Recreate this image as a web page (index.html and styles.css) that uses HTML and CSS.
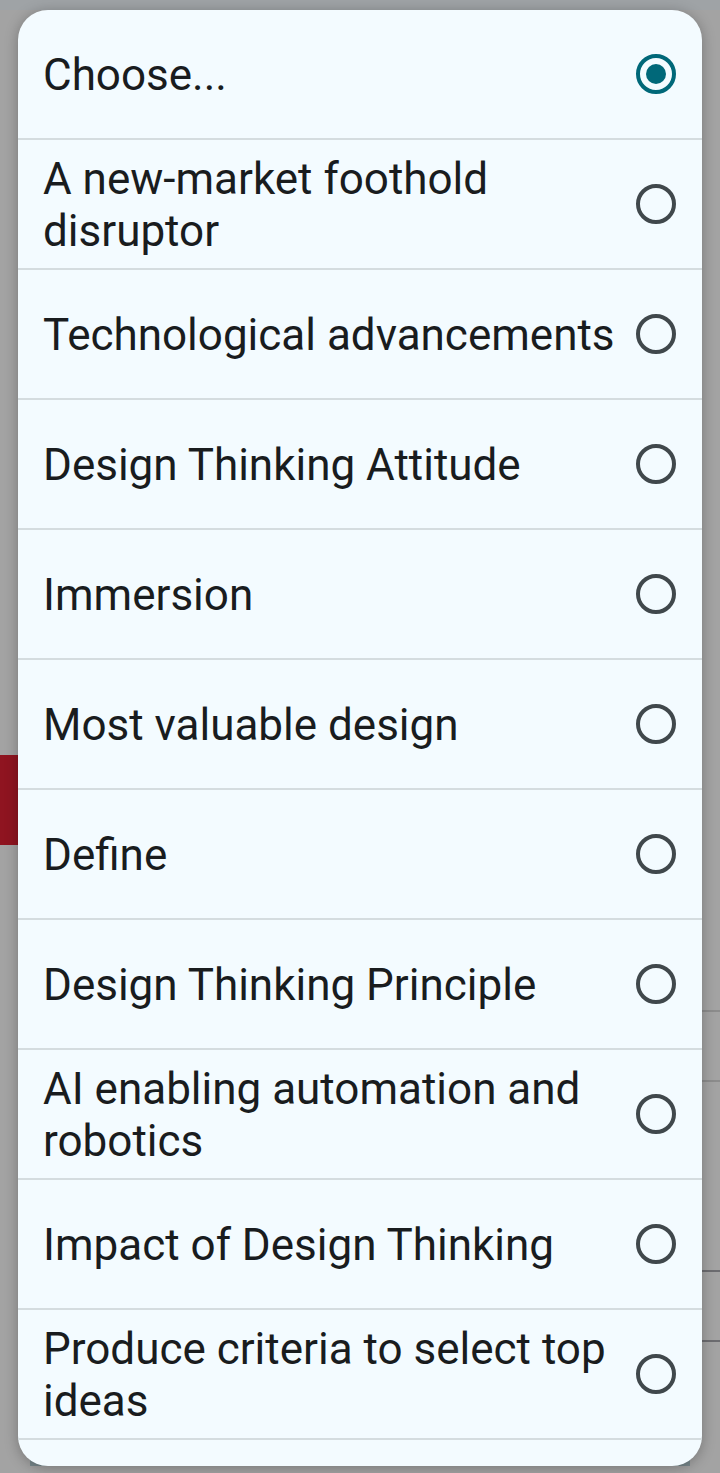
FILE: index.html
```html
<!DOCTYPE html>
<html lang="en">
<head>
    <meta charset="UTF-8">
    <meta name="viewport" content="width=device-width, initial-scale=1.0">
    <title>Choose...</title>
    <link rel="stylesheet" href="styles.css">
</head>
<body>
    <div class="backdrop">
        <div class="top-band"></div>
        <div class="page">
            <div class="red-tab"></div>
            <div class="rule rule-a"></div>
            <div class="rule rule-b"></div>
            <div class="rule rule-c"></div>
            <div class="rule rule-d"></div>
            <div class="bottom-card"></div>
        </div>
    </div>

    <div class="dialog">
        <ul class="options">
            <li class="option selected"><span class="label">Choose...</span><span class="radio"></span></li>
            <li class="option"><span class="label">A new-market foothold disruptor</span><span class="radio"></span></li>
            <li class="option"><span class="label">Technological advancements</span><span class="radio"></span></li>
            <li class="option"><span class="label">Design Thinking Attitude</span><span class="radio"></span></li>
            <li class="option"><span class="label">Immersion</span><span class="radio"></span></li>
            <li class="option"><span class="label">Most valuable design</span><span class="radio"></span></li>
            <li class="option"><span class="label">Define</span><span class="radio"></span></li>
            <li class="option"><span class="label">Design Thinking Principle</span><span class="radio"></span></li>
            <li class="option"><span class="label">AI enabling automation and robotics</span><span class="radio"></span></li>
            <li class="option"><span class="label">Impact of Design Thinking</span><span class="radio"></span></li>
            <li class="option"><span class="label">Produce criteria to select top ideas</span><span class="radio"></span></li>
        </ul>
    </div>
</body>
</html>
```

FILE: styles.css
```css
html, body {
    margin: 0;
    height: 100%;
}
body {
    font-family: Roboto, "Liberation Sans", sans-serif;
    background-color: #a3a3a3;
    overflow: hidden;
}
.backdrop {
    height: 100%;
    display: flex;
    flex-direction: column;
}
.top-band {
    height: 10px;
    background-color: #9fa3a6;
}
.page {
    flex: 1;
    position: relative;
}
.red-tab {
    position: absolute;
    left: 0;
    top: 745px;
    width: 30px;
    height: 90px;
    background-color: #8f1420;
}
.rule {
    position: absolute;
    right: 0;
    width: 40px;
    height: 2px;
}
.rule-a { top: 1000px; background-color: #8c8c8c; }
.rule-b { top: 1070px; background-color: #8c8c8c; }
.rule-c { top: 1260px; background-color: #6c6c70; }
.rule-d { top: 1330px; background-color: #6c6c70; }
.bottom-card {
    position: absolute;
    left: 30px;
    right: 30px;
    top: 1425px;
    height: 31px;
    background-color: #78898d;
}
.dialog {
    position: absolute;
    left: 18px;
    top: 10px;
    width: 684px;
    height: 1456px;
    background-color: #f3fbff;
    border-radius: 30px;
    overflow: hidden;
    box-shadow: 0 2px 14px rgba(0, 0, 0, 0.28);
}
.options {
    list-style: none;
    margin: 0;
    padding: 0;
}
.option {
    display: flex;
    align-items: center;
    height: 128px;
    padding: 0 26px 0 25px;
    border-bottom: 2px solid #d4dcdf;
    gap: 20px;
}
.label {
    flex: 1;
    font-size: 44px;
    line-height: 52px;
    color: #191c1e;
    padding-top: 2px;
}
.radio {
    flex: none;
    width: 32px;
    height: 32px;
    border: 4px solid #40484c;
    border-radius: 50%;
    position: relative;
}
.selected .radio {
    border-color: #006879;
}
.selected .radio::after {
    content: "";
    position: absolute;
    left: 6px;
    top: 6px;
    width: 20px;
    height: 20px;
    border-radius: 50%;
    background-color: #006879;
}
```
